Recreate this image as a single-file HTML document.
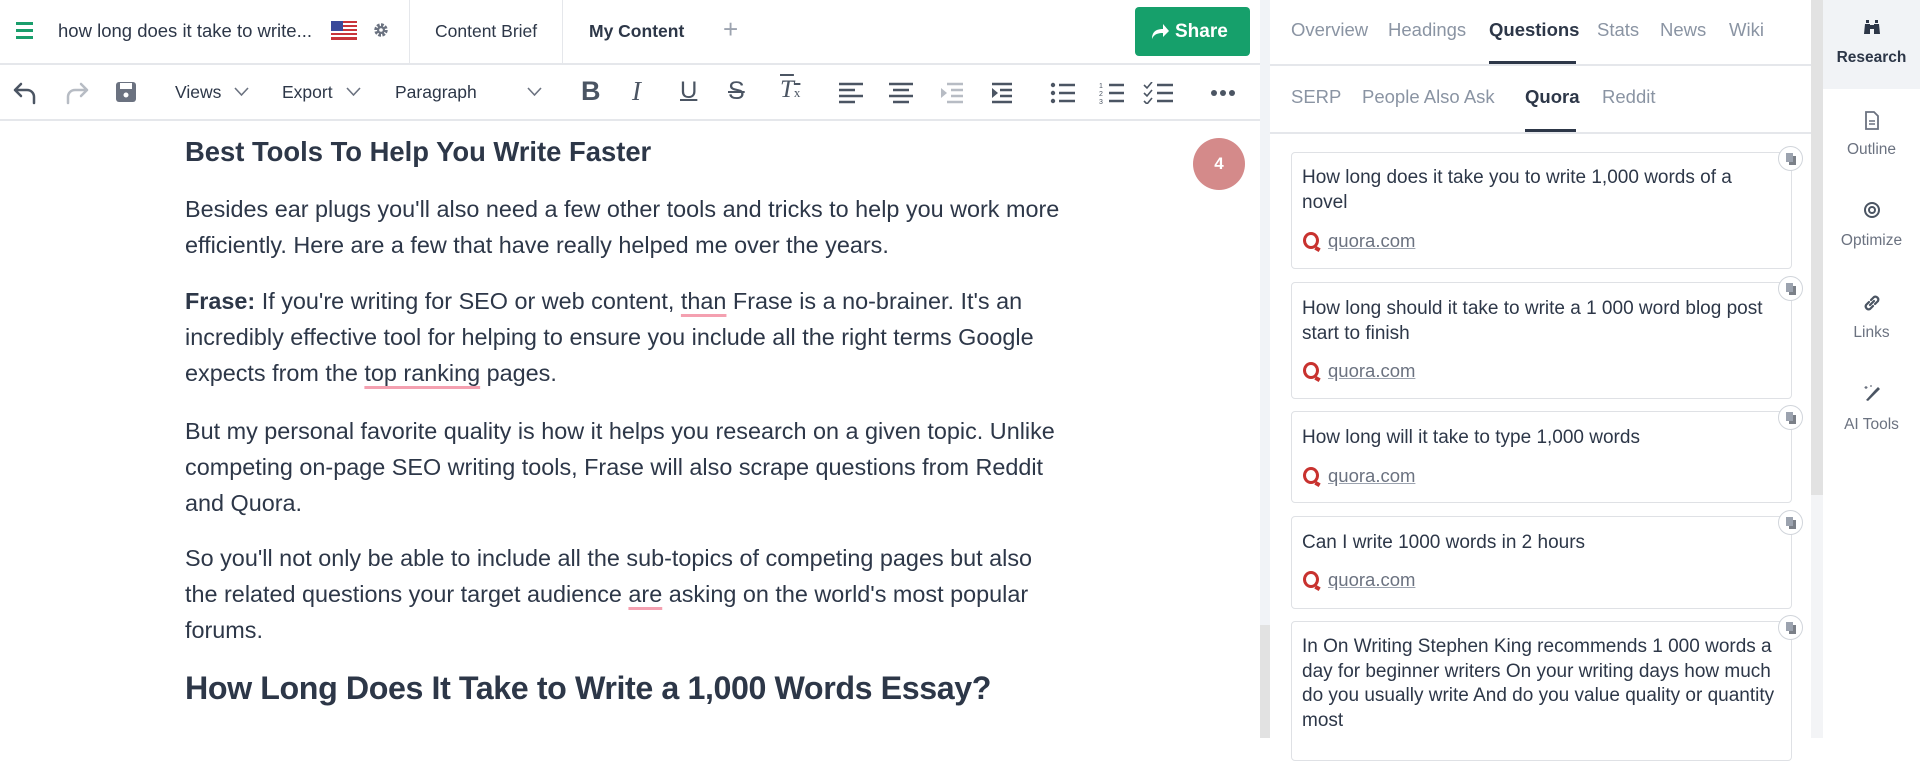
<!DOCTYPE html>
<html><head><meta charset="utf-8"><style>
*{box-sizing:border-box;margin:0;padding:0}
body{width:1920px;height:738px;overflow:hidden;background:#fff;font-family:"Liberation Sans",sans-serif;color:#2d3748;position:relative}
.a{position:absolute;white-space:nowrap}
.top{position:absolute;left:0;top:0;width:1260px;height:65px;border-bottom:2px solid #e5e7eb}
.tb{position:absolute;left:0;top:65px;width:1260px;height:56px;border-bottom:2px solid #e5e7eb}
.vd{position:absolute;top:0;height:64px;width:1px;background:#e5e7eb}
.p{position:absolute;left:185px;font-size:23.4px;line-height:36px;white-space:nowrap;color:#2d3748}
.ul{text-decoration:underline;text-decoration-color:#f4a0b0;text-decoration-thickness:3px;text-underline-offset:5px}
.card{position:absolute;left:1291px;width:501px;border:1px solid #dfe1e5;border-radius:4px;background:#fff}
.ct{position:absolute;left:1302px;font-size:19px;line-height:25px;color:#2d3748;white-space:nowrap}
.q{position:absolute;left:1303px;font-size:18.5px;color:#6b7280;white-space:nowrap}
.q b{display:inline-block;width:16px;height:17px;border:3.5px solid #c8322f;border-radius:50%;vertical-align:-2px;margin-right:9px;font-weight:normal;position:relative}
.q b:after{content:"";position:absolute;right:-4px;bottom:-5px;width:5px;height:4px;background:#c8322f;transform:rotate(30deg)}
.q u{text-decoration-color:#9ca3af}
.cp{position:absolute;left:1778px;width:25px;height:25px;border:1px solid #d1d5db;border-radius:50%;background:#fff}
.cp:after{content:"";position:absolute;left:7px;top:6px;width:7px;height:9px;background:#9ca3af;box-shadow:3px 3px 0 #7b8088}
.tab{position:absolute;top:19px;font-size:18.5px;color:#8a94a3}
.st{position:absolute;top:86px;font-size:18.5px;color:#8a94a3}
.sb{position:absolute;left:1823px;width:97px;text-align:center;font-size:15.5px;color:#6b7280}
</style></head><body>
<div class="top"></div>
<div class="a" style="left:16px;top:22px;width:17px">
<div style="height:3px;background:#1a9e6c;margin-bottom:4px"></div><div style="height:3px;background:#1a9e6c;margin-bottom:4px"></div><div style="height:3px;background:#1a9e6c"></div></div>
<div class="a" style="left:58px;top:20px;font-size:18.5px;color:#2d3748">how long does it take to write...</div>
<svg class="a" style="left:331px;top:21px" width="26" height="19" viewBox="0 0 26 19"><rect width="26" height="19" fill="#fff"/><g fill="#c8343a"><rect y="0" width="26" height="2"/><rect y="4" width="26" height="2"/><rect y="8" width="26" height="2"/><rect y="12" width="26" height="2"/><rect y="16" width="26" height="3"/></g><rect width="12" height="10" fill="#3b4a9a"/></svg>
<svg class="a" style="left:373px;top:22px" width="16" height="16" viewBox="0 0 16 16"><circle cx="8" cy="8" r="5" fill="none" stroke="#6b7280" stroke-width="3.5" stroke-dasharray="2.6 1.3"/><circle cx="8" cy="8" r="4" fill="#6b7280"/><circle cx="8" cy="8" r="1.8" fill="#fff"/></svg>
<div class="vd" style="left:409px"></div>
<div class="a" style="left:435px;top:21px;font-size:17.5px;color:#2d3748">Content Brief</div>
<div class="vd" style="left:562px"></div>
<div class="a" style="left:589px;top:21px;font-size:17.5px;font-weight:bold;color:#2d3748">My Content</div>
<div class="a" style="left:723px;top:14px;font-size:26px;color:#9ca3af">+</div>
<div class="a" style="left:1135px;top:7px;width:115px;height:49px;background:#16a06b;border-radius:4px;color:#fff;font-size:19px;font-weight:bold;line-height:49px;padding-left:40px">Share</div>
<svg class="a" style="left:1150px;top:22px" width="20" height="18" viewBox="0 0 20 18"><path d="M2 17 C2 9 7 7 13 7 L13 2 L19 9 L13 15 L13 11 C8 11 4 12 2 17Z" fill="#fff"/></svg>

<div class="tb"></div>
<svg class="a" style="left:12px;top:80px" width="26" height="26" viewBox="0 0 26 26"><path d="M9 4 L3 10 L9 16 M3 10 H15 C19 10 22 13 22 17 V23" fill="none" stroke="#4b5563" stroke-width="2.5" stroke-linecap="round" stroke-linejoin="round"/></svg>
<svg class="a" style="left:64px;top:80px" width="26" height="26" viewBox="0 0 26 26"><path d="M17 4 L23 10 L17 16 M23 10 H11 C7 10 4 13 4 17 V23" fill="none" stroke="#b7bcc4" stroke-width="2.5" stroke-linecap="round" stroke-linejoin="round"/></svg>
<svg class="a" style="left:115px;top:81px" width="22" height="22" viewBox="0 0 22 22"><rect x="1" y="1" width="20" height="20" rx="3" fill="#6b7280"/><rect x="5" y="2" width="12" height="6" fill="#fff"/><circle cx="11" cy="14" r="2.5" fill="#fff"/></svg>
<div class="a" style="left:175px;top:82px;font-size:17.5px">Views</div>
<svg class="a" style="left:234px;top:87px" width="15" height="10"><path d="M1 1 L7.5 8 L14 1" fill="none" stroke="#6b7280" stroke-width="1.6"/></svg>
<div class="a" style="left:282px;top:82px;font-size:17.5px">Export</div>
<svg class="a" style="left:346px;top:87px" width="15" height="10"><path d="M1 1 L7.5 8 L14 1" fill="none" stroke="#6b7280" stroke-width="1.6"/></svg>
<div class="a" style="left:395px;top:82px;font-size:17.5px">Paragraph</div>
<svg class="a" style="left:527px;top:87px" width="15" height="10"><path d="M1 1 L7.5 8 L14 1" fill="none" stroke="#6b7280" stroke-width="1.6"/></svg>
<div class="a" style="left:581px;top:76px;font-size:27px;font-weight:bold;color:#4b5563">B</div>
<div class="a" style="left:632px;top:76px;font-size:27px;font-style:italic;color:#4b5563;font-family:'Liberation Serif',serif">I</div>
<div class="a" style="left:680px;top:77px;font-size:24px;color:#4b5563;text-decoration:underline;text-decoration-thickness:2px">U</div>
<div class="a" style="left:728px;top:77px;font-size:25px;color:#4b5563;text-decoration:line-through;text-decoration-thickness:2px">S</div>
<div class="a" style="left:780px;top:76px;font-size:25px;font-style:italic;color:#4b5563;font-family:'Liberation Serif',serif;text-decoration:overline">T<span style="font-size:13px;font-style:normal">x</span></div>
<svg class="a" style="left:839px;top:82px" width="1000" height="22">
<g stroke="#4b5563" stroke-width="2.4">
<path d="M0 2H24M0 8H16M0 14H24M0 20H16"/>
<path d="M50 2H74M54 8H70M50 14H74M54 20H70"/>
<path d="M108 2H124M112 8H124M112 14H124M108 20H124" stroke="#b7bcc4"/>
<path d="M153 2H173M161 8H173M161 14H173M153 20H173"/>
</g>
<path d="M108 11 L102 6 V16Z" fill="#b7bcc4"/>
<path d="M153 6 L159 11 L153 16Z" fill="#4b5563"/>
<g fill="#4b5563"><circle cx="214" cy="3" r="2.2"/><circle cx="214" cy="11" r="2.2"/><circle cx="214" cy="19" r="2.2"/></g>
<g stroke="#4b5563" stroke-width="2.4"><path d="M220 3H236M220 11H236M220 19H236M270 3H285M270 11H285M270 19H285M318 3H334M318 11H334M318 19H334"/></g>
<g fill="#4b5563" font-size="7" font-family="Liberation Sans"><text x="260" y="6">1</text><text x="260" y="14">2</text><text x="260" y="22">3</text></g>
<g stroke="#4b5563" stroke-width="1.6" fill="none"><path d="M305 3l3 3 5-6M305 11l3 3 5-6M305 19l3 3 5-6"/></g>
<g fill="#4b5563"><circle cx="375" cy="11" r="3"/><circle cx="384" cy="11" r="3"/><circle cx="393" cy="11" r="3"/></g>
</svg>

<div class="a" style="left:185px;top:136px;font-size:27.4px;font-weight:bold;color:#2d3748">Best Tools To Help You Write Faster</div>
<div class="a" style="left:1193px;top:138px;width:52px;height:52px;border-radius:50%;background:#d48a8a;color:#fff;font-weight:bold;font-size:17px;text-align:center;line-height:52px">4</div>
<div class="p" style="top:191px">Besides ear plugs you'll also need a few other tools and tricks to help you work more<br>efficiently. Here are a few that have really helped me over the years.</div>
<div class="p" style="top:283px"><b>Frase:</b> If you're writing for SEO or web content, <span class="ul">than</span> Frase is a no-brainer. It's an<br>incredibly effective tool for helping to ensure you include all the right terms Google<br>expects from the <span class="ul">top ranking</span> pages.</div>
<div class="p" style="top:413px">But my personal favorite quality is how it helps you research on a given topic. Unlike<br>competing on-page SEO writing tools, Frase will also scrape questions from Reddit<br>and Quora.</div>
<div class="p" style="top:540px">So you'll not only be able to include all the sub-topics of competing pages but also<br>the related questions your target audience <span class="ul">are</span> asking on the world's most popular<br>forums.</div>
<div class="a" style="left:185px;top:670px;font-size:32.2px;font-weight:bold;letter-spacing:-0.4px;color:#2d3748">How Long Does It Take to Write a 1,000 Words Essay?</div>

<div class="a" style="left:1260px;top:0;width:10px;height:738px;background:#f1f3f7"></div>
<div class="a" style="left:1260px;top:625px;width:10px;height:113px;background:#e2e2e2"></div>
<div class="a" style="left:1811px;top:0;width:12px;height:738px;background:#f3f4f6"></div>
<div class="a" style="left:1811px;top:0;width:12px;height:495px;background:#e2e2e2"></div>

<div class="tab" style="left:1291px">Overview</div>
<div class="tab" style="left:1388px">Headings</div>
<div class="tab" style="left:1489px;color:#2d3748;font-weight:bold">Questions</div>
<div class="tab" style="left:1597px">Stats</div>
<div class="tab" style="left:1660px">News</div>
<div class="tab" style="left:1729px">Wiki</div>
<div class="a" style="left:1270px;top:64px;width:541px;height:2px;background:#e5e7eb"></div>
<div class="a" style="left:1489px;top:61px;width:87px;height:3px;background:#2d3748"></div>
<div class="st" style="left:1291px">SERP</div>
<div class="st" style="left:1362px">People Also Ask</div>
<div class="st" style="left:1525px;color:#2d3748;font-weight:bold">Quora</div>
<div class="st" style="left:1602px">Reddit</div>
<div class="a" style="left:1270px;top:132px;width:541px;height:2px;background:#e5e7eb"></div>
<div class="a" style="left:1525px;top:129px;width:51px;height:3px;background:#2d3748"></div>

<div class="card" style="top:152px;height:117px"></div>
<div class="ct" style="top:165px">How long does it take you to write 1,000 words of a<br>novel</div>
<div class="q" style="top:230px"><b></b><u>quora.com</u></div>
<div class="cp" style="top:146px"></div>

<div class="card" style="top:282px;height:117px"></div>
<div class="ct" style="top:296px">How long should it take to write a 1 000 word blog post<br>start to finish</div>
<div class="q" style="top:360px"><b></b><u>quora.com</u></div>
<div class="cp" style="top:276px"></div>

<div class="card" style="top:411px;height:92px"></div>
<div class="ct" style="top:425px">How long will it take to type 1,000 words</div>
<div class="q" style="top:465px"><b></b><u>quora.com</u></div>
<div class="cp" style="top:405px"></div>

<div class="card" style="top:516px;height:93px"></div>
<div class="ct" style="top:530px">Can I write 1000 words in 2 hours</div>
<div class="q" style="top:569px"><b></b><u>quora.com</u></div>
<div class="cp" style="top:510px"></div>

<div class="card" style="top:621px;height:140px"></div>
<div class="ct" style="top:635px;line-height:24.5px">In On Writing Stephen King recommends 1 000 words a<br>day for beginner writers On your writing days how much<br>do you usually write And do you value quality or quantity<br>most</div>
<div class="cp" style="top:615px"></div>

<div class="a" style="left:1823px;top:0;width:97px;height:89px;background:#f1f3f6"></div>
<svg class="a" style="left:1862px;top:19px" width="20" height="16" viewBox="0 0 20 16"><path d="M2 15 L3 5 H8 V15Z M12 15 V5 H17 L18 15Z M4 4 V1 H7 V4Z M13 4 V1 H16 V4Z M8 6 H12 V10 H8Z" fill="#2d3748"/></svg>
<div class="sb" style="top:49px;font-weight:bold;color:#2d3748">Research</div>
<svg class="a" style="left:1864px;top:111px" width="16" height="19" viewBox="0 0 16 19"><path d="M2 1 H10 L14 5 V18 H2Z" fill="none" stroke="#6b7280" stroke-width="1.8"/><path d="M5 10H11M5 13H11" stroke="#6b7280" stroke-width="1.6"/></svg>
<div class="sb" style="top:141px">Outline</div>
<svg class="a" style="left:1863px;top:201px" width="18" height="18" viewBox="0 0 18 18"><circle cx="9" cy="9" r="7" fill="none" stroke="#4b5563" stroke-width="2"/><circle cx="9" cy="9" r="3" fill="none" stroke="#4b5563" stroke-width="2"/></svg>
<div class="sb" style="top:232px">Optimize</div>
<svg class="a" style="left:1863px;top:294px" width="18" height="18" viewBox="0 0 18 18"><path d="M8 6 L11 3 A3 3 0 0 1 15 7 L12 10 M10 12 L7 15 A3 3 0 0 1 3 11 L6 8 M7 11 L11 7" fill="none" stroke="#4b5563" stroke-width="2.2" stroke-linecap="round"/></svg>
<div class="sb" style="top:324px">Links</div>
<svg class="a" style="left:1863px;top:384px" width="18" height="18" viewBox="0 0 18 18"><path d="M3 16 L12 6 L14 8 L5 17Z M12 6 L15 3 L17 5 L14 8" fill="#4b5563"/><path d="M3 2v3M1.5 3.5h3M8 1v2" stroke="#6b7280" stroke-width="1.2"/></svg>
<div class="sb" style="top:416px">AI Tools</div>
</body></html>
